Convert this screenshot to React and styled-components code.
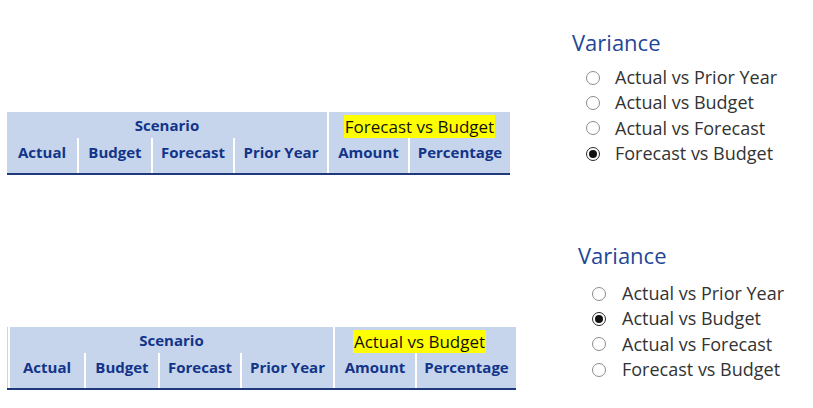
import React from "react";
import styled, { createGlobalStyle } from "styled-components";

const GlobalStyle = createGlobalStyle`
  html, body {
    margin: 0;
    padding: 0;
    background: #ffffff;
  }
  body {
    font-family: "Open Sans", "Noto Sans", sans-serif;
  }
`;

const Page = styled.div`
  width: 813px;
  height: 408px;
  display: flex;
  flex-direction: column;
  overflow: hidden;
`;

const Section = styled.section`
  display: flex;
  align-items: flex-start;
  height: ${(p) => p.$height}px;
  padding-left: 7px;
`;

/* ---------- matrix header ---------- */

const Header = styled.div`
  margin-top: 112px;
  display: flex;
  background: #c6d4ec;
  border-bottom: 2px solid #1f3a7a;
`;

const LeadRule = styled.div`
  width: 2px;
  margin-left: 1px;
  background: #ffffff;
`;

const Group = styled.div`
  display: flex;
  flex-direction: column;
`;

const GroupRule = styled.div`
  width: 2px;
  background: #ffffff;
  align-self: stretch;
`;

const GroupTitle = styled.div`
  height: 26px;
  display: flex;
  align-items: flex-end;
  justify-content: center;
  padding-right: ${(p) => p.$nudge || 0}px;
  font-size: 15px;
  font-weight: 700;
  line-height: 26px;
  color: #123488;
  white-space: nowrap;
`;

const Highlight = styled.span`
  display: inline-block;
  height: 23px;
  line-height: 23px;
  padding: 0 1px;
  background: #ffff00;
  color: #111111;
  font-size: 17px;
  font-weight: 400;
`;

const CellRow = styled.div`
  display: flex;
  height: 35px;
`;

const Cell = styled.div`
  box-sizing: border-box;
  width: ${(p) => p.$w}px;
  border-left: ${(p) => (p.$first ? "0" : "2px solid #ffffff")};
  padding-bottom: 6px;
  text-align: center;
  font-size: 15px;
  font-weight: 700;
  line-height: 29px;
  color: #123488;
  white-space: nowrap;
`;

function MatrixHeader({ lead, widths, variance, nudge }) {
  const [actual, budget, forecast, prior, amount, pct] = widths;
  return (
    <Header>
      {lead && <LeadRule />}
      <Group>
        <GroupTitle>Scenario</GroupTitle>
        <CellRow>
          <Cell $first $w={actual}>Actual</Cell>
          <Cell $w={budget}>Budget</Cell>
          <Cell $w={forecast}>Forecast</Cell>
          <Cell $w={prior}>Prior Year</Cell>
        </CellRow>
      </Group>
      <GroupRule />
      <Group>
        <GroupTitle $nudge={nudge}>
          <Highlight>{variance}</Highlight>
        </GroupTitle>
        <CellRow>
          <Cell $first $w={amount}>Amount</Cell>
          <Cell $w={pct}>Percentage</Cell>
        </CellRow>
      </Group>
    </Header>
  );
}

/* ---------- variance slicer ---------- */

const Slicer = styled.div`
  margin-top: ${(p) => p.$top}px;
  margin-left: 62px;
  display: flex;
  flex-direction: column;
`;

const SlicerTitle = styled.div`
  font-size: 22px;
  line-height: 30px;
  color: #1f4797;
  font-weight: 400;
`;

const Options = styled.div`
  margin-top: ${(p) => p.$gap}px;
  display: flex;
  flex-direction: column;
  padding-left: 14px;
`;

const Option = styled.div`
  display: flex;
  align-items: center;
  gap: ${(p) => p.$gap}px;
  height: 25.3px;
  font-size: 18px;
  line-height: 25px;
  color: #333333;
  white-space: nowrap;
`;

const Radio = styled.span`
  box-sizing: border-box;
  width: 14px;
  height: 14px;
  flex: none;
  border-radius: 50%;
  border: 1px solid ${(p) => (p.$on ? "#2b2b2b" : "#8c8c8c")};
  background: #ffffff;
  display: flex;
  align-items: center;
  justify-content: center;

  &::after {
    content: "";
    width: 8px;
    height: 8px;
    border-radius: 50%;
    background: ${(p) => (p.$on ? "#111111" : "transparent")};
  }
`;

const OPTIONS = [
  "Actual vs Prior Year",
  "Actual vs Budget",
  "Actual vs Forecast",
  "Forecast vs Budget",
];

function VarianceSlicer({ selected, gap, top, listGap }) {
  return (
    <Slicer $top={top}>
      <SlicerTitle>Variance</SlicerTitle>
      <Options $gap={listGap}>
        {OPTIONS.map((o) => (
          <Option key={o} $gap={gap}>
            <Radio $on={o === selected} />
            {o}
          </Option>
        ))}
      </Options>
    </Slicer>
  );
}

export default function App() {
  return (
    <>
      <GlobalStyle />
      <Page>
        <Section $height={215}>
          <MatrixHeader
            widths={[70, 74, 82, 94, 79, 102]}
            variance="Forecast vs Budget"
          />
          <VarianceSlicer
            selected="Forecast vs Budget"
            gap={15}
            top={27}
            listGap={8}
          />
        </Section>
        <Section $height={193}>
          <MatrixHeader
            lead
            widths={[74, 74, 82, 93, 80, 101]}
            variance="Actual vs Budget"
            nudge={12}
          />
          <VarianceSlicer
            selected="Actual vs Budget"
            gap={16}
            top={25}
            listGap={11}
          />
        </Section>
      </Page>
    </>
  );
}
